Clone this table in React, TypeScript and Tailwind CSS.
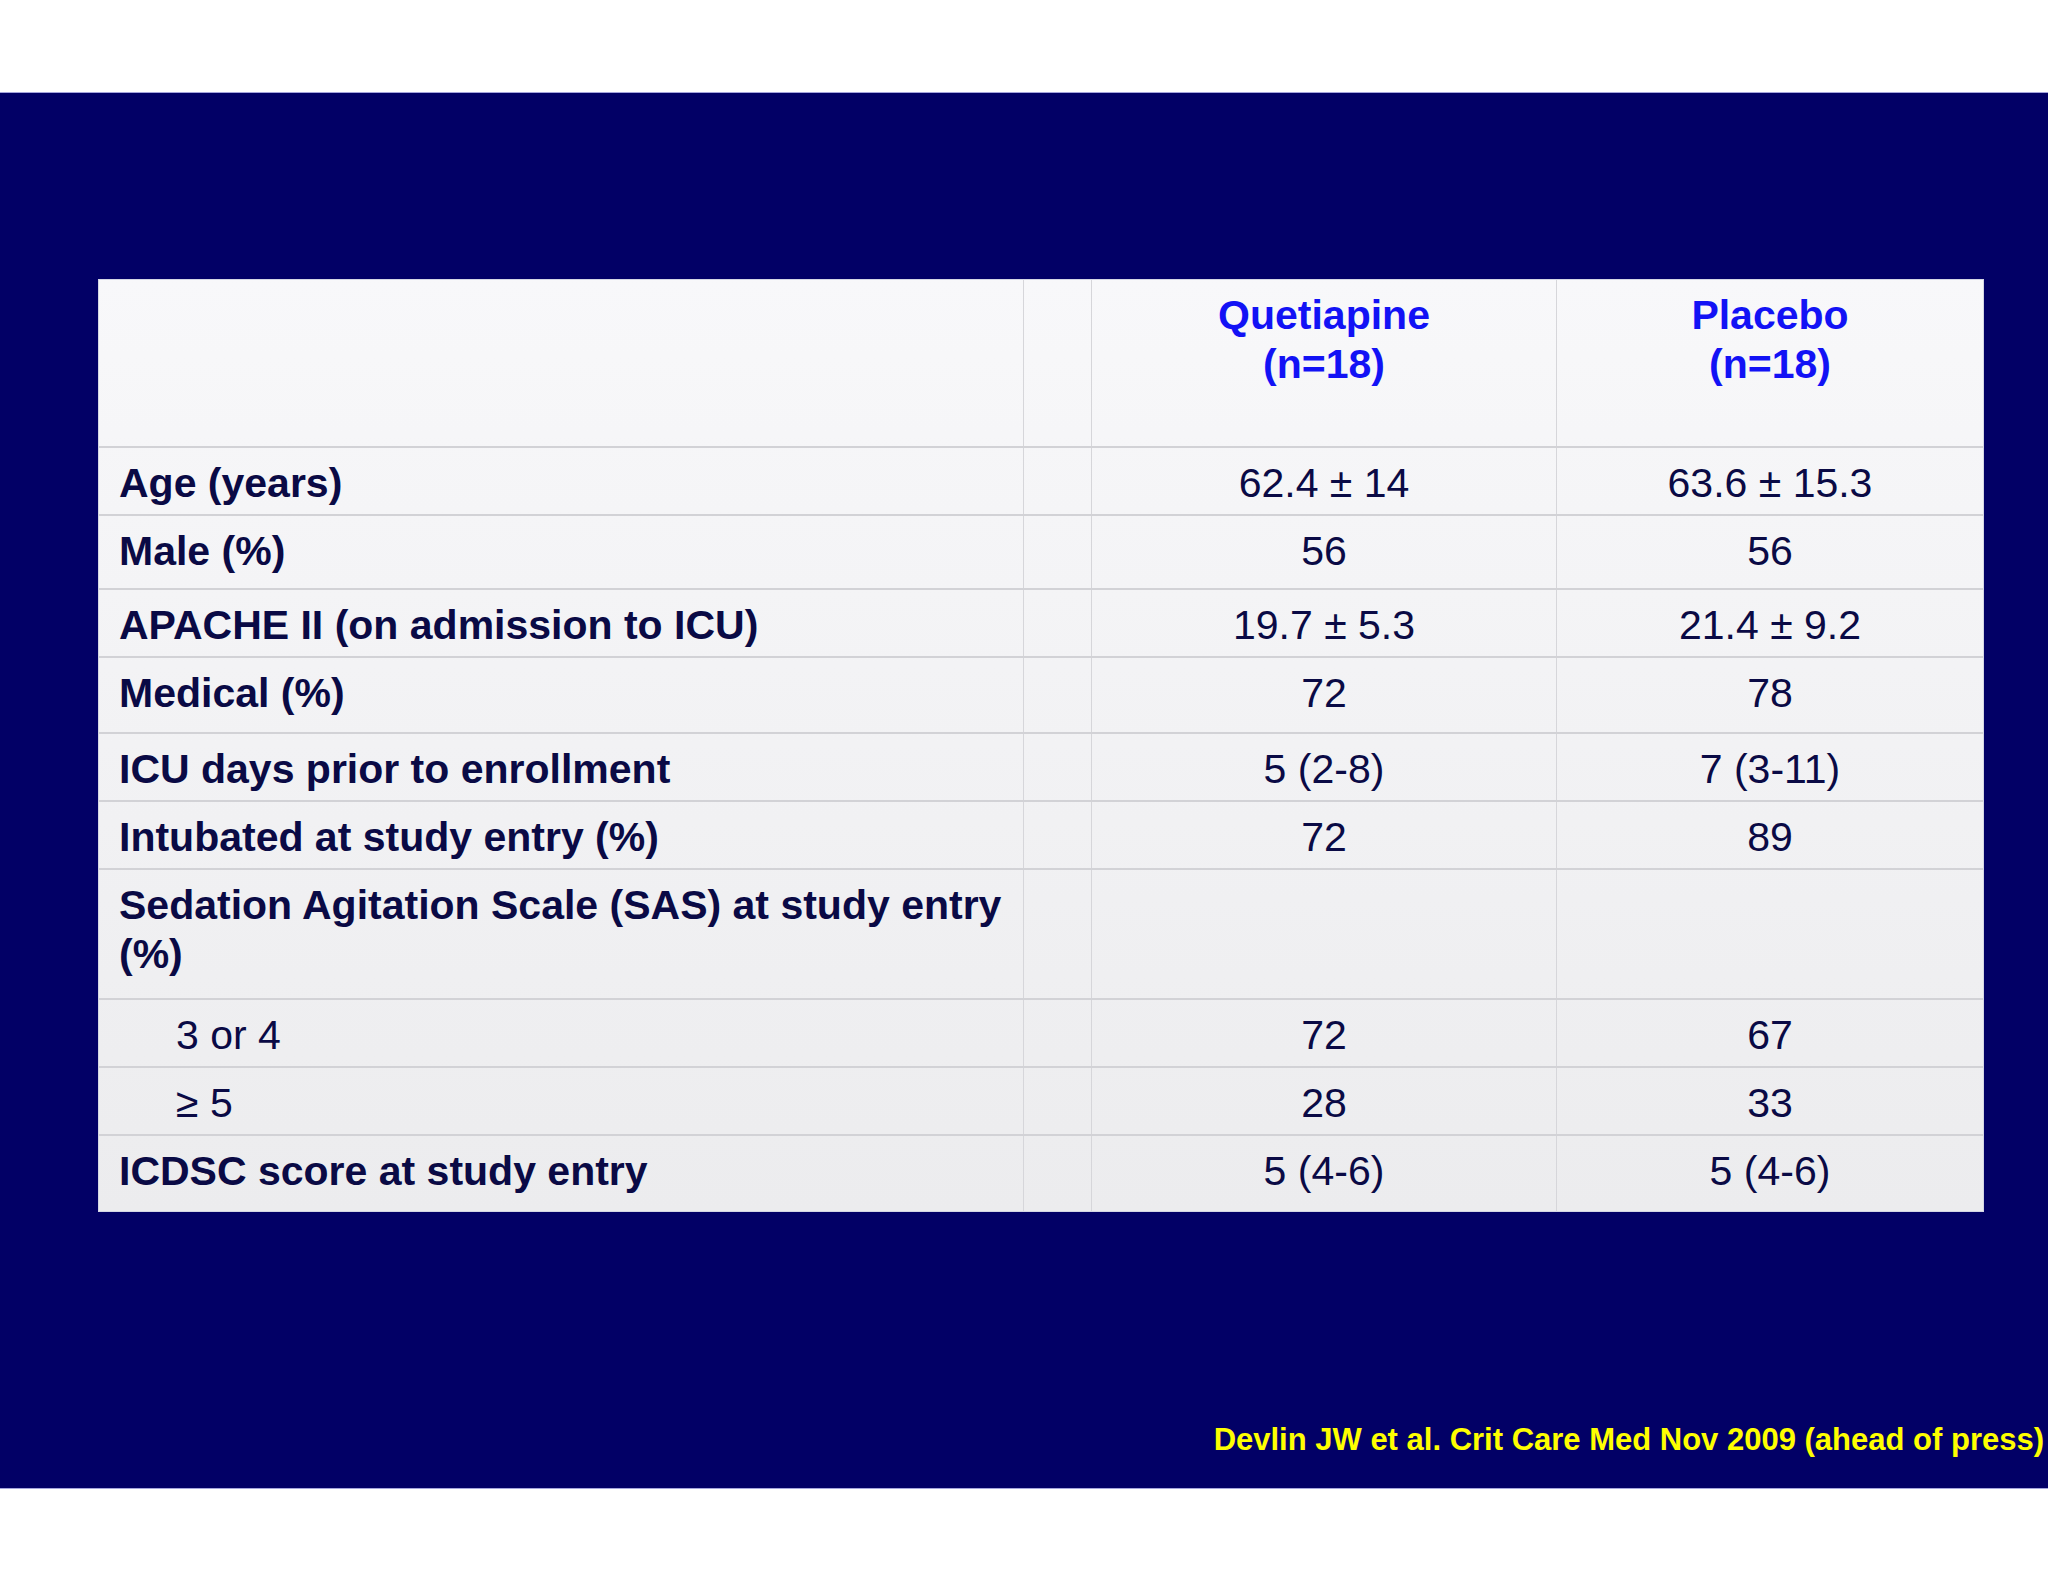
import React from 'react';

type Row = {
  label: React.ReactNode;
  q: string;
  p: string;
  h: string;
  bold?: boolean;
  indent?: boolean;
};

const rows: Row[] = [
  { label: 'Age (years)', q: '62.4 ± 14', p: '63.6 ± 15.3', h: 'h-[68px]', bold: true },
  { label: 'Male (%)', q: '56', p: '56', h: 'h-[74px]', bold: true },
  { label: 'APACHE II (on admission to ICU)', q: '19.7 ± 5.3', p: '21.4 ± 9.2', h: 'h-[68px]', bold: true },
  { label: 'Medical (%)', q: '72', p: '78', h: 'h-[76px]', bold: true },
  { label: 'ICU days prior to enrollment', q: '5 (2-8)', p: '7 (3-11)', h: 'h-[68px]', bold: true },
  { label: 'Intubated at study entry (%)', q: '72', p: '89', h: 'h-[68px]', bold: true },
  {
    label: (
      <>
        Sedation Agitation Scale (SAS) at study entry
        <br />
        (%)
      </>
    ),
    q: '',
    p: '',
    h: 'h-[130px]',
    bold: true,
  },
  { label: '3 or 4', q: '72', p: '67', h: 'h-[68px]', indent: true },
  { label: '≥ 5', q: '28', p: '33', h: 'h-[68px]', indent: true },
  { label: 'ICDSC score at study entry', q: '5 (4-6)', p: '5 (4-6)', h: 'h-[75px]', bold: true },
];

const cell = 'border-r border-[#d6d6da] pt-[11px] leading-[49px]';

const App: React.FC = () => {
  return (
    <div className="w-[2048px] h-[1582px] bg-white flex flex-col font-['Liberation_Sans',Arial,sans-serif]">
      <div className="h-[92px]" />
      <div className="h-[1397px] bg-[#020066] border-t border-b border-[#a4a4dc] flex flex-col">
        <div className="h-[186px]" />
        <div className="ml-[98px] w-[1886px] bg-gradient-to-b from-[#f8f8fa] to-[#ececee] border border-[#d4d6e4] text-[41px] text-[#0a0a45]">
          {/* header */}
          <div className="flex h-[168px] border-b-2 border-[#d2d2d6]">
            <div className={`${cell} w-[925px]`} />
            <div className={`${cell} w-[68px]`} />
            <div className={`${cell} w-[465px] text-center font-bold text-[#1212f5]`}>
              Quetiapine
              <br />
              (n=18)
            </div>
            <div className="w-[426px] pt-[11px] leading-[49px] text-center font-bold text-[#1212f5]">
              Placebo
              <br />
              (n=18)
            </div>
          </div>
          {rows.map((r, i) => (
            <div
              key={i}
              className={`flex ${r.h} ${i < rows.length - 1 ? 'border-b-2 border-[#d2d2d6]' : ''}`}
            >
              <div
                className={`${cell} w-[925px] ${r.indent ? 'pl-[77px]' : 'pl-[20px]'} ${r.bold ? 'font-bold' : ''}`}
              >
                {r.label}
              </div>
              <div className={`${cell} w-[68px]`} />
              <div className={`${cell} w-[465px] text-center`}>{r.q}</div>
              <div className="w-[426px] pt-[11px] leading-[49px] text-center">{r.p}</div>
            </div>
          ))}
        </div>
        <div className="flex-1 flex items-end justify-end pr-[4px] pb-[33px]">
          <span className="text-[31px] leading-none font-bold text-[#ffff00] whitespace-nowrap">
            Devlin JW et al. Crit Care Med Nov 2009 (ahead of press)
          </span>
        </div>
      </div>
      <div className="flex-1" />
    </div>
  );
};

export default App;
